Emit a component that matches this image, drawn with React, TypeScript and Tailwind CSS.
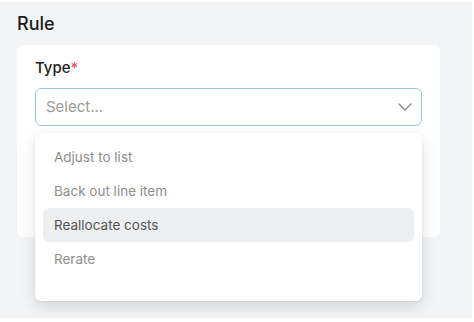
import { ChevronDown } from 'lucide-react';

const options = ['Adjust to list', 'Back out line item', 'Reallocate costs', 'Rerate'];

const App = () => {
  const active = 'Reallocate costs';

  return (
    <div className="w-[474px] h-[322px] bg-white font-['Inter',sans-serif]">
      <div className="h-[316px] mt-[2px] mr-[2px] bg-[#f3f4f6] px-[17px] pt-[11px]">
        {/* Heading */}
        <h2 className="text-[18px] leading-[22px] font-medium text-[#1c1c1c]">Rule</h2>

        {/* Card */}
        <div className="relative mt-[10px] w-[423px] h-[192px] bg-white rounded-md px-[18px] pt-[13px]">
          <label className="block text-[15px] leading-[20px] font-medium text-[#222]">
            Type<span className="text-[#e05a5a]">*</span>
          </label>

          <div className="mt-[10px] h-[38px] border border-[#9fc3e4] rounded-md flex items-center justify-between pl-[10px] pr-[4px]">
            <span className="text-[15px] text-[#9a9a9a]">Select...</span>
            <ChevronDown className="w-[24px] h-[24px] text-[#8a8a8a]" strokeWidth={1.4} />
          </div>

          {/* Menu */}
          <div className="absolute left-[18px] right-[18px] top-[88px] h-[168px] bg-white rounded-md shadow-[0_6px_16px_rgba(0,0,0,0.12),0_1px_3px_rgba(0,0,0,0.06)] px-[8px] pt-[7px]">
            {options.map((opt) => (
              <div
                key={opt}
                className={
                  opt === active
                    ? 'h-[34px] flex items-center pl-[11px] rounded-md bg-[#eeeff1] text-[13.5px] text-[#555]'
                    : 'h-[34px] flex items-center pl-[11px] rounded-md text-[13.5px] text-[#8e8e8e]'
                }
              >
                {opt}
              </div>
            ))}
          </div>
        </div>
      </div>
    </div>
  );
};

export default App;
